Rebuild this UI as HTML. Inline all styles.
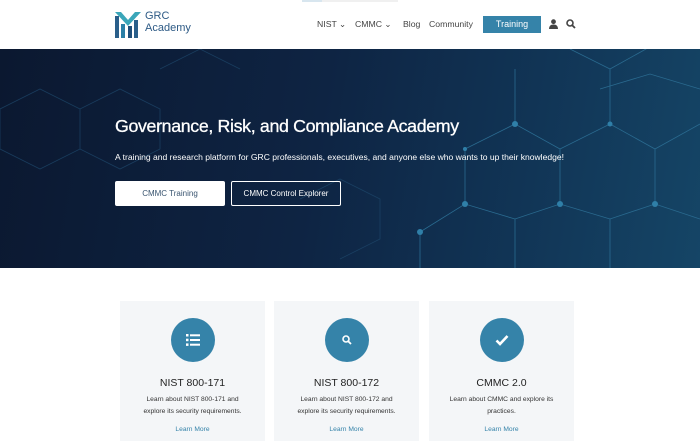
<!DOCTYPE html>
<html><head><style>
*{margin:0;padding:0;box-sizing:border-box}
body{width:700px;height:430px;overflow:hidden;background:#fff;font-family:"Liberation Sans",sans-serif;position:relative}
.hdr{position:absolute;top:0;left:0;width:700px;height:49px;background:#fff}
.nav{position:absolute;top:19px;font-size:8.7px;color:#444}
.hero{position:absolute;top:49px;left:0;width:700px;height:219px;background:linear-gradient(100deg,#0b1830 0%,#0e2443 45%,#113556 75%,#154566 100%);overflow:hidden}
.card{position:absolute;top:301px;width:145px;height:140px;background:#f4f6f8;text-align:center}
.circ{width:44px;height:44px;border-radius:50%;background:#3583a9;margin:17px auto 0;position:relative}
.card h3{font-weight:normal;font-size:10.5px;color:#222;margin-top:15px}
.card p{font-size:6.7px;color:#333;line-height:12px;margin-top:5px}
.card a{display:block;font-size:6.7px;color:#3583a9;margin-top:8px}
</style></head><body>
<div class="hdr">
<div style="position:absolute;left:302px;top:0;width:20px;height:2px;background:#d8e6ef"></div>
<div style="position:absolute;left:322px;top:0;width:76px;height:2px;background:#f0f0f0"></div>
<svg style="position:absolute;left:115px;top:12px" width="26" height="26" viewBox="0 0 26 26">
<polygon points="0,0 13,14 26,0 20,0 13,8 6,0" fill="#3aa6b9"/>
<rect x="0" y="4" width="4" height="22" fill="#2a5f8a"/>
<rect x="6" y="12" width="4" height="14" fill="#2a7fa6"/>
<rect x="13" y="14" width="4" height="12" fill="#1f4f7a"/>
<rect x="19" y="8" width="4" height="18" fill="#2a5f8a"/>
</svg>
<div style="position:absolute;left:145px;top:11px;font-size:11px;line-height:11.5px;color:#2d5a85">GRC<br>Academy</div>
<div class="nav" style="left:317px">NIST ⌄</div>
<div class="nav" style="left:355px">CMMC ⌄</div>
<div class="nav" style="left:403px">Blog</div>
<div class="nav" style="left:429px">Community</div>
<div style="position:absolute;left:483px;top:16px;width:58px;height:17px;background:#3583a9;color:#fff;font-size:9px;text-align:center;line-height:17px">Training</div>
<svg style="position:absolute;left:549px;top:19px" width="9" height="10" viewBox="0 0 9 10"><circle cx="4.5" cy="2.7" r="2.4" fill="#444"/><path d="M0 10 Q0 5.5 4.5 5.5 Q9 5.5 9 10Z" fill="#444"/></svg>
<svg style="position:absolute;left:566px;top:19px" width="10" height="10" viewBox="0 0 10 10"><circle cx="4" cy="4" r="3" fill="none" stroke="#444" stroke-width="1.6"/><path d="M6.2 6.2L9 9" stroke="#444" stroke-width="1.8"/></svg>
</div>
<div class="hero">
<svg width="700" height="219" style="position:absolute;left:0;top:0" stroke-width="0.8" fill="none">
<g stroke="#1f4a6e" opacity="0.7">
<path d="M0 60 L40 40 L80 60 L80 100 L40 120 L0 100Z"/>
<path d="M80 60 L120 40 L160 60 L160 100 L120 120 L80 100"/>
<path d="M160 20 L200 0 M200 0 L240 20"/>
<path d="M300 150 L340 130 L380 150 L380 190 L340 210"/>
</g>
<g stroke="#2a6a8f">
<path d="M420 183 L465 155 L515 170 L560 155 L610 170 L655 155 L700 170"/>
<path d="M465 155 L465 100 L515 75 L560 100 L560 155"/>
<path d="M515 75 L515 20 M560 100 L610 75 L655 100 L655 155"/>
<path d="M610 75 L610 20 L655 -5 M610 20 L570 0"/>
<path d="M655 100 L700 75 M420 183 L420 219 M515 170 L515 219 M610 170 L610 219"/>
<path d="M600 40 L650 25 L700 40"/>
</g>
<g fill="#2f7fa8"><circle cx="515" cy="75" r="3"/><circle cx="465" cy="155" r="3"/><circle cx="560" cy="155" r="3"/><circle cx="420" cy="183" r="3"/><circle cx="655" cy="155" r="3"/><circle cx="610" cy="75" r="2.5"/><circle cx="465" cy="100" r="2"/></g>
</svg>
<div style="position:absolute;left:115px;top:67px;font-size:17.8px;letter-spacing:-0.35px;color:#fff;-webkit-text-stroke:0.3px #fff;white-space:nowrap">Governance, Risk, and Compliance Academy</div>
<div style="position:absolute;left:115px;top:103px;font-size:8.55px;color:#fff;white-space:nowrap">A training and research platform for GRC professionals, executives, and anyone else who wants to up their knowledge!</div>
<div style="position:absolute;left:115px;top:132px;width:110px;height:25px;background:#fff;border-radius:2px;color:#3a5570;font-size:8px;text-align:center;line-height:25px">CMMC Training</div>
<div style="position:absolute;left:231px;top:132px;width:110px;height:25px;border:1px solid #fff;border-radius:2px;color:#fff;font-size:8px;text-align:center;line-height:23px">CMMC Control Explorer</div>
</div>
<div class="card" style="left:120px"><div class="circ"><svg style="position:absolute;left:15px;top:16px" width="14" height="12" viewBox="0 0 14 12" fill="#fff"><rect x="0" y="0" width="2.5" height="2.5"/><rect x="4" y="0.3" width="10" height="2"/><rect x="0" y="4.7" width="2.5" height="2.5"/><rect x="4" y="5" width="10" height="2"/><rect x="0" y="9.4" width="2.5" height="2.5"/><rect x="4" y="9.7" width="10" height="2"/></svg></div><h3>NIST 800-171</h3><p>Learn about NIST 800-171 and<br>explore its security requirements.</p><a>Learn More</a></div>
<div class="card" style="left:274px"><div class="circ"><svg style="position:absolute;left:17px;top:17px" width="10" height="10" viewBox="0 0 10 10"><circle cx="4" cy="4" r="3" fill="none" stroke="#fff" stroke-width="1.6"/><path d="M6.2 6.2L9 9" stroke="#fff" stroke-width="1.8"/></svg></div><h3>NIST 800-172</h3><p>Learn about NIST 800-172 and<br>explore its security requirements.</p><a>Learn More</a></div>
<div class="card" style="left:429px"><div class="circ"><svg style="position:absolute;left:15px;top:16px" width="14" height="12" viewBox="0 0 14 12"><path d="M1.5 6.5L5 10L12.5 2" fill="none" stroke="#fff" stroke-width="2.6"/></svg></div><h3>CMMC 2.0</h3><p>Learn about CMMC and explore its<br>practices.</p><a>Learn More</a></div>
</body></html>
